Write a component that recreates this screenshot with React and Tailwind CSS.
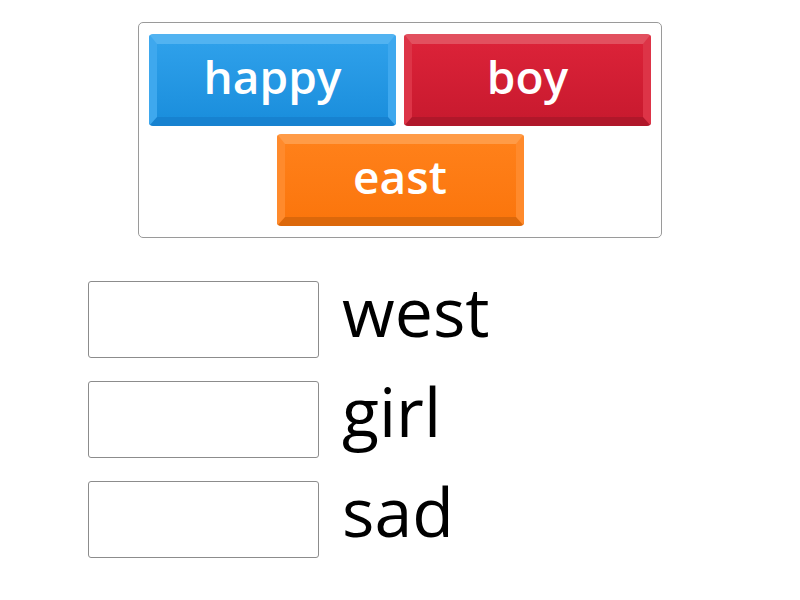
import React from "react";

const tiles = [
  {
    word: "happy",
    cls: "bg-gradient-to-b from-[#2ea0ea] to-[#1b8fdd] border-t-[#52b3f1] border-x-[#3ea8ee] border-b-[#1782d0]",
  },
  {
    word: "boy",
    cls: "bg-gradient-to-b from-[#db2238] to-[#c91a2f] border-t-[#e2505f] border-x-[#dd3447] border-b-[#b0172a]",
  },
  {
    word: "east",
    cls: "bg-gradient-to-b from-[#ff8019] to-[#fb760d] border-t-[#ff9b47] border-x-[#ff8a2c] border-b-[#dc680b]",
  },
];

const targets = ["west", "girl", "sad"];

function Tile({ word, cls }) {
  return (
    <div
      className={`w-[247px] h-[92px] rounded-[4px] border-solid border-t-[10px] border-x-[8px] border-b-[9px] flex items-center justify-center ${cls}`}
    >
      <span className="text-white font-semibold text-[46px] leading-none -mt-[10px]">
        {word}
      </span>
    </div>
  );
}

export default function App() {
  return (
    <div
      className="w-[800px] h-[600px] bg-white"
      style={{ fontFamily: '"Open Sans", sans-serif' }}
    >
      <div className="pt-[22px]">
        <div className="mx-auto w-[524px] h-[216px] border border-[#9a9a9a] rounded-[5px] pt-[11px] px-[10px] flex flex-col items-center gap-[8px]">
          <div className="flex gap-[8px]">
            <Tile {...tiles[0]} />
            <Tile {...tiles[1]} />
          </div>
          <Tile {...tiles[2]} />
        </div>
      </div>

      <div className="pl-[88px] pt-[43px] flex flex-col gap-[23px]">
        {targets.map((t) => (
          <div key={t} className="flex items-center gap-[23px] h-[77px]">
            <div className="w-[231px] h-[77px] border border-[#8c8c8c] rounded-[3px] bg-white" />
            <span className="text-black text-[68px] leading-none -mt-[17px]">
              {t}
            </span>
          </div>
        ))}
      </div>
    </div>
  );
}
